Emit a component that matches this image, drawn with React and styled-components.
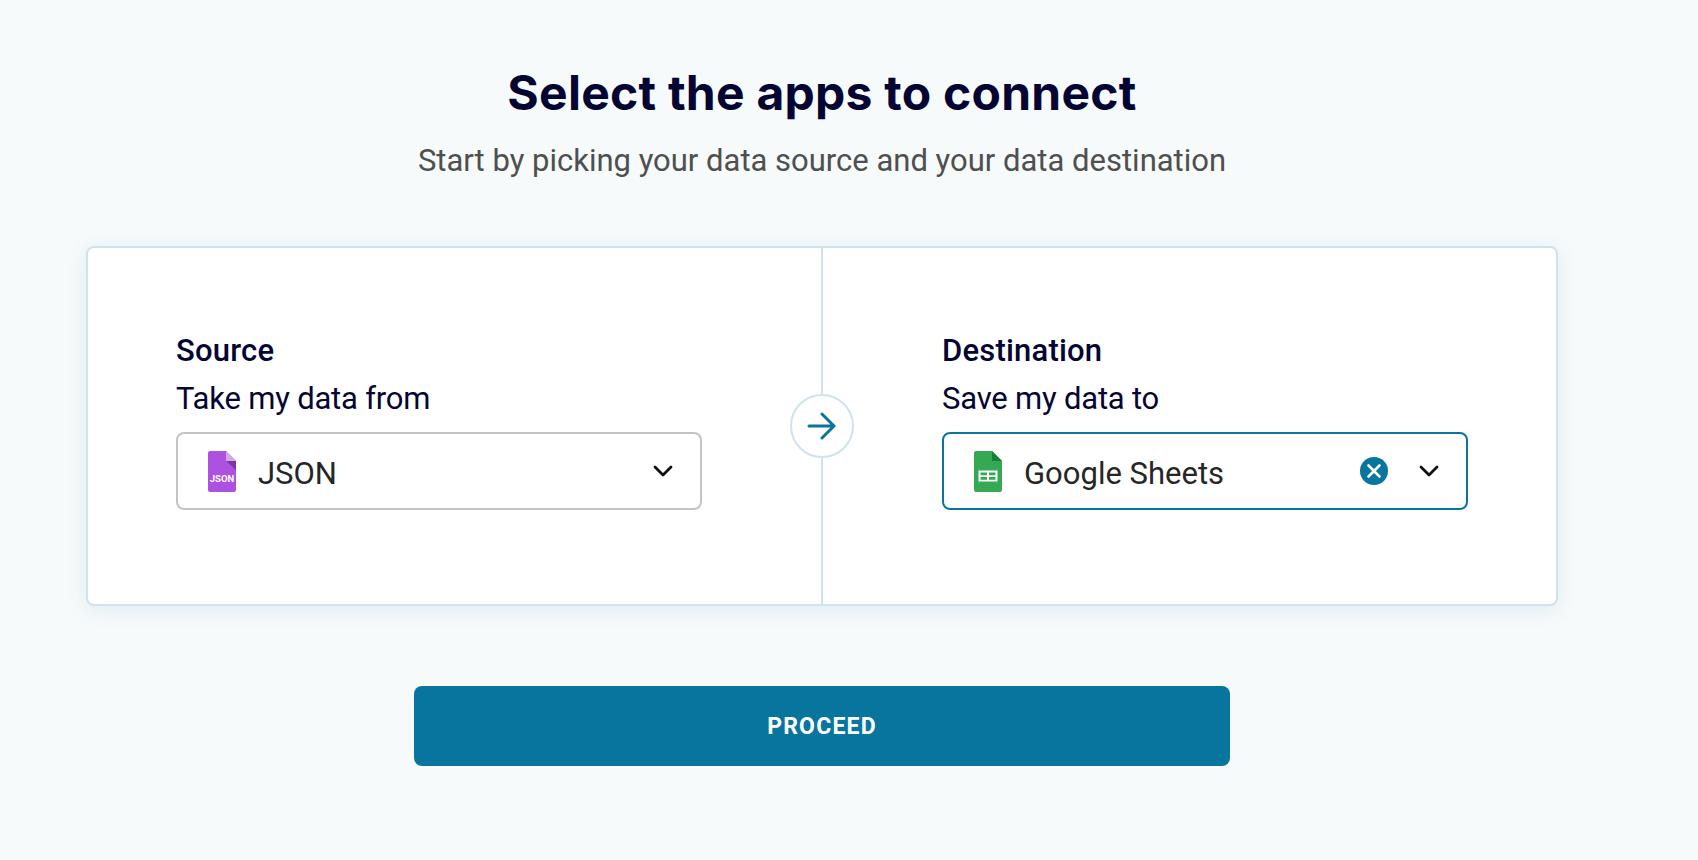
import React from 'react';
import styled, { createGlobalStyle } from 'styled-components';

const colors = {
    page: '#f6fafb',
    ink: '#050533',
    muted: '#4f4f4f',
    text: '#262626',
    line: '#d0e2ec',
    primary: '#08759f',
    idle: '#c4c4c4',
};

const GlobalStyle = createGlobalStyle`
    html, body {
        margin: 0;
        padding: 0;
        background: ${colors.page};
        font-family: Roboto, "Liberation Sans", sans-serif;
    }
`;

const Page = styled.main`
    width: 1472px;
    height: 860px;
    margin-left: 86px;
    padding-top: 64px;
    box-sizing: border-box;
    display: flex;
    flex-direction: column;
    align-items: center;
`;

const Title = styled.h1`
    margin: 0;
    font-family: Inter, sans-serif;
    font-size: 48px;
    line-height: 58px;
    font-weight: 700;
    letter-spacing: 0.25px;
    color: ${colors.ink};
`;

const Subtitle = styled.p`
    margin: 16px 0 0;
    font-size: 31px;
    line-height: 46px;
    font-weight: 400;
    color: ${colors.muted};
`;

const Card = styled.section`
    position: relative;
    width: 100%;
    height: 360px;
    margin-top: 62px;
    box-sizing: border-box;
    display: grid;
    grid-template-columns: 733px 1fr;
    background: #fff;
    border: 2px solid ${colors.line};
    border-radius: 8px;
    box-shadow: 0 4px 20px rgba(8, 117, 159, 0.1);
`;

const Column = styled.div`
    display: flex;
    flex-direction: column;
    padding: 82px ${p => (p.$right ? '88px' : '119px')} 0 ${p => (p.$right ? '119px' : '88px')};
    border-left: ${p => (p.$right ? `2px solid ${colors.line}` : 'none')};
`;

const Label = styled.div`
    font-size: 31px;
    line-height: 42px;
    font-weight: 500;
    letter-spacing: 0.2px;
    color: ${colors.ink};
`;

const Hint = styled.div`
    margin-top: 6px;
    font-size: 31px;
    line-height: 42px;
    letter-spacing: -0.2px;
    color: ${colors.ink};
`;

const Select = styled.div`
    display: flex;
    align-items: center;
    height: 78px;
    margin-top: 12px;
    padding: 0 26px 0 30px;
    box-sizing: border-box;
    border: 2px solid ${p => (p.$active ? colors.primary : colors.idle)};
    border-radius: 8px;
`;

const Value = styled.span`
    flex: 1;
    margin: 4px 0 0 22px;
    font-size: 31px;
    color: ${colors.text};
`;

const Clear = styled.span`
    display: flex;
    align-items: center;
    justify-content: center;
    width: 28px;
    height: 28px;
    margin-right: 30px;
    border-radius: 50%;
    background: ${colors.primary};
`;

const ArrowBadge = styled.div`
    position: absolute;
    left: 702px;
    top: 146px;
    width: 64px;
    height: 64px;
    box-sizing: border-box;
    display: flex;
    align-items: center;
    justify-content: center;
    background: #fff;
    border: 2px solid ${colors.line};
    border-radius: 50%;
`;

const Proceed = styled.button`
    width: 816px;
    height: 80px;
    margin-top: 80px;
    padding-top: 2px;
    border: none;
    border-radius: 8px;
    background: ${colors.primary};
    color: #fff;
    font-family: Roboto, sans-serif;
    font-size: 23px;
    font-weight: 700;
    letter-spacing: 1.2px;
`;

function Chevron() {
    return (
        <svg width="22" height="14" viewBox="0 0 22 14" fill="none">
            <path d="M3 3l8 8 8-8" stroke="#111" strokeWidth="2.8" strokeLinecap="round" strokeLinejoin="round" />
        </svg>
    );
}

function JsonIcon() {
    return (
        <svg width="28" height="41" viewBox="0 0 28 41">
            <path d="M2 0h16l10 10v29a2 2 0 0 1-2 2H2a2 2 0 0 1-2-2V2a2 2 0 0 1 2-2z" fill="#ad52e0" />
            <path d="M18 0l10 10h-10z" fill="#d3a8e8" />
            <path d="M18 10h10v9z" fill="#7a3a9e" />
            <text x="14" y="30.5" textAnchor="middle" fontFamily="Roboto, sans-serif" fontSize="9.5" fontWeight="700" fill="#fff">JSON</text>
        </svg>
    );
}

function SheetsIcon() {
    return (
        <svg width="28" height="41" viewBox="0 0 28 41">
            <path d="M2 0h16l10 10v29a2 2 0 0 1-2 2H2a2 2 0 0 1-2-2V2a2 2 0 0 1 2-2z" fill="#34a853" />
            <path d="M18 0l10 10h-10z" fill="#188038" />
            <path d="M4.5 19.5h19v11h-19z" fill="#fff" />
            <path d="M6.5 21.5h6.5v2.8H6.5zM15 21.5h6.5v2.8H15zM6.5 26h6.5v2.8H6.5zM15 26h6.5v2.8H15z" fill="#34a853" />
        </svg>
    );
}

export default function App() {
    return (
        <Page>
            <GlobalStyle />
            <Title>Select the apps to connect</Title>
            <Subtitle>Start by picking your data source and your data destination</Subtitle>
            <Card>
                <Column>
                    <Label>Source</Label>
                    <Hint>Take my data from</Hint>
                    <Select>
                        <JsonIcon />
                        <Value>JSON</Value>
                        <Chevron />
                    </Select>
                </Column>
                <Column $right>
                    <Label>Destination</Label>
                    <Hint>Save my data to</Hint>
                    <Select $active>
                        <SheetsIcon />
                        <Value>Google Sheets</Value>
                        <Clear>
                            <svg width="16" height="16" viewBox="0 0 16 16" fill="none">
                                <path d="M2.5 2.5l11 11M13.5 2.5l-11 11" stroke="#fff" strokeWidth="2.6" strokeLinecap="round" />
                            </svg>
                        </Clear>
                        <Chevron />
                    </Select>
                </Column>
                <ArrowBadge>
                    <svg width="30" height="28" viewBox="0 0 30 28" fill="none">
                        <path d="M2 14h25M15 2l12 12-12 12" stroke={colors.primary} strokeWidth="3" strokeLinecap="round" strokeLinejoin="round" />
                    </svg>
                </ArrowBadge>
            </Card>
            <Proceed>PROCEED</Proceed>
        </Page>
    );
}
